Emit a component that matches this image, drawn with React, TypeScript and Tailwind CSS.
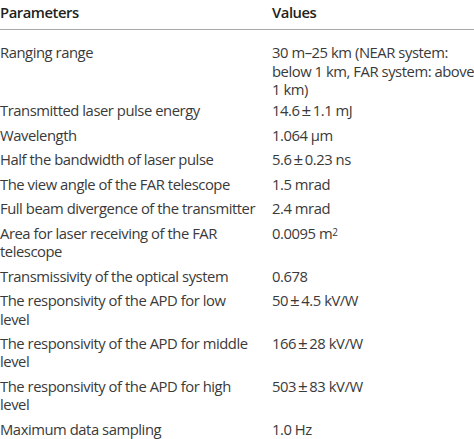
import type { ReactNode } from "react";

type Row = { label: ReactNode; value: ReactNode };

const pm = <span className="mx-[2px] text-[17px] leading-[0]">±</span>;

const rows: Row[] = [
  {
    label: "Ranging range",
    value: (
      <>
        30 m–25 km (NEAR system:
        <br />
        below 1 km, FAR system: above
        <br />1 km)
      </>
    ),
  },
  { label: "Transmitted laser pulse energy", value: <>14.6{pm}1.1 mJ</> },
  { label: "Wavelength", value: "1.064 µm" },
  { label: "Half the bandwidth of laser pulse", value: <>5.6{pm}0.23 ns</> },
  { label: "The view angle of the FAR telescope", value: "1.5 mrad" },
  { label: "Full beam divergence of the transmitter", value: "2.4 mrad" },
  {
    label: (
      <>
        Area for laser receiving of the FAR
        <br />
        telescope
      </>
    ),
    value: (
      <>
        0.0095 m<sup className="text-[10px] relative -top-[3px]">2</sup>
      </>
    ),
  },
  { label: "Transmissivity of the optical system", value: "0.678" },
  {
    label: (
      <>
        The responsivity of the APD for low
        <br />
        level
      </>
    ),
    value: <>50{pm}4.5 kV/W</>,
  },
  {
    label: (
      <>
        The responsivity of the APD for middle
        <br />
        level
      </>
    ),
    value: <>166{pm}28 kV/W</>,
  },
  {
    label: (
      <>
        The responsivity of the APD for high
        <br />
        level
      </>
    ),
    value: <>503{pm}83 kV/W</>,
  },
  { label: "Maximum data sampling", value: "1.0 Hz" },
];

export default function App() {
  return (
    <div
      className="w-[474px] h-[439px] overflow-hidden bg-white pt-[3px] text-[14.8px] leading-[18.25px] tracking-[-0.45px] text-[#3a3a3a]"
      style={{ fontFamily: '"Open Sans", "Noto Sans", sans-serif' }}
    >
      <div className="grid grid-cols-[272px_1fr] border-b border-[#a8a8a8] pb-[8px] font-semibold text-[#231f20]">
        <div>Parameters</div>
        <div>Values</div>
      </div>
      <div className="pt-[10px]">
        {rows.map((r, i) => (
          <div key={i} className="grid grid-cols-[272px_1fr] pt-[3px] pb-[3.3px] first:pb-[0.25px]">
            <div className="whitespace-nowrap">{r.label}</div>
            <div className="whitespace-nowrap">{r.value}</div>
          </div>
        ))}
      </div>
    </div>
  );
}
